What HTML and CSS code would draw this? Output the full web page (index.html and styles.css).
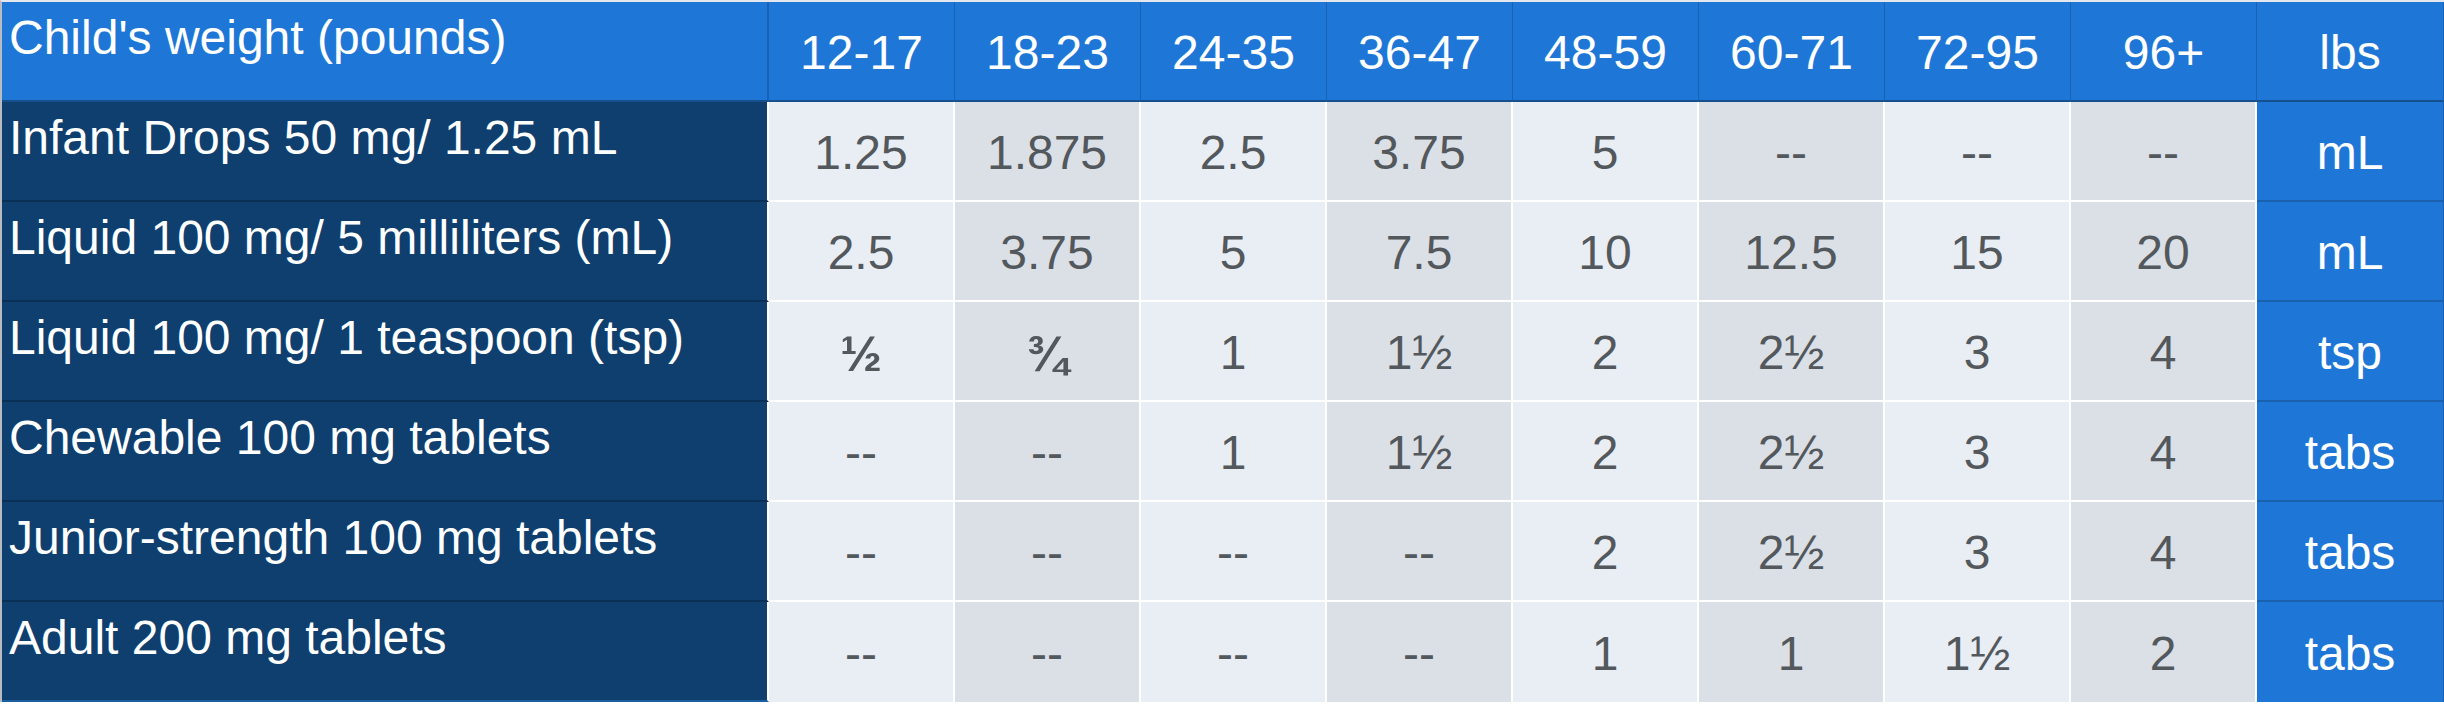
FILE: index.html
```html
<!DOCTYPE html>
<html lang="en">
<head>
<meta charset="utf-8">
<title>Dosage chart</title>
<link rel="stylesheet" href="styles.css">
</head>
<body>
<div class="chart" role="table">
  <div class="row head" role="row">
    <div class="cell label" role="columnheader">Child's weight (pounds)</div>
    <div class="cell" role="columnheader">12-17</div>
    <div class="cell" role="columnheader">18-23</div>
    <div class="cell" role="columnheader">24-35</div>
    <div class="cell" role="columnheader">36-47</div>
    <div class="cell" role="columnheader">48-59</div>
    <div class="cell" role="columnheader">60-71</div>
    <div class="cell" role="columnheader">72-95</div>
    <div class="cell" role="columnheader">96+</div>
    <div class="cell unit" role="columnheader">lbs</div>
  </div>
  <div class="row" role="row">
    <div class="cell label">Infant Drops 50 mg/ 1.25 mL</div>
    <div class="cell odd">1.25</div><div class="cell even">1.875</div><div class="cell odd">2.5</div><div class="cell even">3.75</div>
    <div class="cell odd">5</div><div class="cell even">--</div><div class="cell odd">--</div><div class="cell even">--</div>
    <div class="cell unit">mL</div>
  </div>
  <div class="row" role="row">
    <div class="cell label">Liquid 100 mg/ 5 milliliters (mL)</div>
    <div class="cell odd">2.5</div><div class="cell even">3.75</div><div class="cell odd">5</div><div class="cell even">7.5</div>
    <div class="cell odd">10</div><div class="cell even">12.5</div><div class="cell odd">15</div><div class="cell even">20</div>
    <div class="cell unit">mL</div>
  </div>
  <div class="row" role="row">
    <div class="cell label">Liquid 100 mg/ 1 teaspoon (tsp)</div>
    <div class="cell odd"><span class="frac">½</span></div><div class="cell even"><span class="frac">¾</span></div><div class="cell odd">1</div><div class="cell even">1½</div>
    <div class="cell odd">2</div><div class="cell even">2½</div><div class="cell odd">3</div><div class="cell even">4</div>
    <div class="cell unit">tsp</div>
  </div>
  <div class="row" role="row">
    <div class="cell label">Chewable 100 mg tablets</div>
    <div class="cell odd">--</div><div class="cell even">--</div><div class="cell odd">1</div><div class="cell even">1½</div>
    <div class="cell odd">2</div><div class="cell even">2½</div><div class="cell odd">3</div><div class="cell even">4</div>
    <div class="cell unit">tabs</div>
  </div>
  <div class="row" role="row">
    <div class="cell label">Junior-strength 100 mg tablets</div>
    <div class="cell odd">--</div><div class="cell even">--</div><div class="cell odd">--</div><div class="cell even">--</div>
    <div class="cell odd">2</div><div class="cell even">2½</div><div class="cell odd">3</div><div class="cell even">4</div>
    <div class="cell unit">tabs</div>
  </div>
  <div class="row last" role="row">
    <div class="cell label">Adult 200 mg tablets</div>
    <div class="cell odd">--</div><div class="cell even">--</div><div class="cell odd">--</div><div class="cell even">--</div>
    <div class="cell odd">1</div><div class="cell even">1</div><div class="cell odd">1½</div><div class="cell even">2</div>
    <div class="cell unit">tabs</div>
  </div>
</div>
</body>
</html>
```
FILE: styles.css
```css
html, body {
  margin: 0;
  padding: 0;
  background: #ffffff;
}

body {
  width: 2444px;
  height: 704px;
  overflow: hidden;
  font-family: "Liberation Sans", Arial, sans-serif;
}

.chart {
  display: flex;
  flex-direction: column;
  border-top: 2px solid #e4e8ee;
  border-left: 2px solid #b8bcc2;
  width: 2444px;
  box-sizing: border-box;
}

.row {
  display: grid;
  grid-template-columns: 767px repeat(8, 186px) 187px;
  height: 100px;
}

.cell {
  box-sizing: border-box;
  display: flex;
  align-items: center;
  justify-content: center;
  padding-top: 3px;
  font-size: 48px;
  line-height: 56px;
  border-right: 2px solid #ffffff;
  border-bottom: 2px solid #ffffff;
  color: #53585c;
}

.frac {
  font-weight: 700;
  font-size: 50px;
  margin-top: 2px;
}

.cell.odd {
  background: #e9edf4;
}

.cell.even {
  background: #dbdfe6;
}

.cell.label {
  align-items: flex-start;
  justify-content: flex-start;
  padding: 8px 0 0 7px;
  background: #0e3f6f;
  color: #ffffff;
  border-bottom-color: #0a3056;
  white-space: nowrap;
}

.cell.unit {
  background: #1e77d6;
  color: #ffffff;
  border-right: 1px solid #1a5fa8;
  border-bottom-color: #1a60ad;
}

.head .cell {
  background: #1e77d6;
  color: #ffffff;
  border-right: 1px solid #1762b2;
  border-bottom: 2px solid #16508c;
}

.head .cell.label {
  border-right: 2px solid #1762b2;
}

.last .cell {
  border-bottom: none;
}

.last .cell.label {
  border-bottom: 2px solid #1b5fa3;
}

.last .cell.unit {
  border-bottom: none;
}
```
